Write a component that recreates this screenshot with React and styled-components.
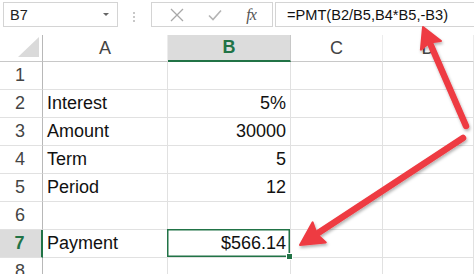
import * as React from 'react';
import styled, { createGlobalStyle } from 'styled-components';

const GlobalStyle = createGlobalStyle`
    html, body {
        margin:0;
        padding:0;
        background:#fff;
        overflow:hidden;
    }
`;

const GREEN = '#217346';
const GRID = '#e1e1e1';

const Page = styled.div`
    position:relative;
    width:474px;
    height:274px;
    overflow:hidden;
    background:#fff;
    font-family:"Liberation Sans", Arial, sans-serif;
`;

const Toolbar = styled.div`
    display:flex;
    align-items:flex-start;
    height:35px;
    padding-top:2px;
    box-sizing:border-box;
`;

const NameBox = styled.div`
    position:relative;
    display:flex;
    align-items:center;
    justify-content:space-between;
    width:115px;
    height:25px;
    margin-left:3px;
    padding:0 8px 0 6px;
    box-sizing:border-box;
    border:1px solid #d4d4d4;
    font-size:14.5px;
    color:#222;
`;

const DropArrow = styled.span`
    width:0;
    height:0;
    border-left:3px solid transparent;
    border-right:3px solid transparent;
    border-top:3px solid #666;
`;

const Grip = styled.div`
    display:flex;
    flex-direction:column;
    gap:2px;
    width:2px;
    margin:10px 16px 0 15px;
    span {
        width:2px;
        height:2px;
        background:#c8c8c8;
    }
`;

const FxButtons = styled.div`
    display:flex;
    align-items:center;
    justify-content:space-around;
    width:122px;
    height:25px;
    padding:0 4px 0 6px;
    box-sizing:border-box;
    border:1px solid #d4d4d4;
`;

const FxLabel = styled.span`
    font-family:"Liberation Serif", "Times New Roman", serif;
    font-style:italic;
    font-size:16px;
    color:#555;
    letter-spacing:-1px;
`;

const FormulaInput = styled.div`
    flex:1;
    display:flex;
    align-items:center;
    height:25px;
    margin-left:2px;
    padding-left:11px;
    box-sizing:border-box;
    border:1px solid #d4d4d4;
    border-right:none;
    font-size:14.6px;
    color:#111;
    white-space:nowrap;
`;

const Sheet = styled.div`
    display:grid;
    grid-template-columns:43px 125px 123px 92px 1fr;
    grid-template-rows:27px;
    grid-auto-rows:28px;
`;

const Cell = styled.div`
    position:relative;
    display:flex;
    align-items:center;
    justify-content:${p => (p.$right ? 'flex-end' : 'flex-start')};
    padding:${p => (p.$right ? '0 4px 0 0' : '0 0 0 4px')};
    box-sizing:border-box;
    border-right:1px solid ${GRID};
    border-bottom:1px solid ${GRID};
    font-size:18px;
    color:#111;
    box-shadow:${p => (p.$selected ? `inset 0 0 0 1.5px ${GREEN}` : 'none')};
    margin:${p => (p.$selected ? '-1px 0 0 -1px' : '0')};
`;

const Handle = styled.span`
    position:absolute;
    right:-3px;
    bottom:-3px;
    width:5px;
    height:5px;
    background:${GREEN};
    border:1px solid #fff;
    z-index:2;
`;

const ColHeader = styled.div`
    display:flex;
    align-items:center;
    justify-content:center;
    box-sizing:border-box;
    border-right:1px solid ${p => (p.$active ? '#c8c8c8' : '#ececec')};
    border-bottom:${p => (p.$active ? `2px solid ${GREEN}` : '1px solid #c8c8c8')};
    background:${p => (p.$active ? '#dcdcdc' : '#fff')};
    color:${p => (p.$active ? GREEN : '#444')};
    font-weight:${p => (p.$active ? 'bold' : 'normal')};
    font-size:18px;
`;

const Corner = styled.div`
    display:flex;
    align-items:flex-end;
    justify-content:flex-end;
    padding:0 3px 4px 0;
    box-sizing:border-box;
    border-right:1px solid #b8b8b8;
    border-bottom:1px solid #c8c8c8;
    span {
        width:21px;
        height:20px;
        background:#dadada;
        clip-path:polygon(100% 0, 100% 100%, 0 100%);
    }
`;

const RowHeader = styled.div`
    display:flex;
    align-items:center;
    justify-content:center;
    padding-right:2px;
    box-sizing:border-box;
    border-right:${p => (p.$active ? `2px solid ${GREEN}` : '1px solid #b8b8b8')};
    border-bottom:1px solid ${GRID};
    background:${p => (p.$active ? '#dcdcdc' : '#fff')};
    color:${p => (p.$active ? GREEN : '#444')};
    font-weight:${p => (p.$active ? 'bold' : 'normal')};
    font-size:18px;
`;

const Overlay = styled.svg`
    position:absolute;
    left:0;
    top:0;
    pointer-events:none;
`;

const columns = ['A', 'B', 'C', 'D'];

const rows = [
    { n: 1, label: '', value: '' },
    { n: 2, label: 'Interest', value: '5%' },
    { n: 3, label: 'Amount', value: '30000' },
    { n: 4, label: 'Term', value: '5' },
    { n: 5, label: 'Period', value: '12' },
    { n: 6, label: '', value: '' },
    { n: 7, label: 'Payment', value: '$566.14', selected: true },
    { n: 8, label: '', value: '' },
];

const Arrow = ({ tail, tip, len, half }) => {
    const dx = tip[0] - tail[0];
    const dy = tip[1] - tail[1];
    const d = Math.hypot(dx, dy);
    const ux = dx / d;
    const uy = dy / d;
    const bx = tip[0] - ux * len;
    const by = tip[1] - uy * len;
    const px = -uy;
    const py = ux;
    const head = `${tip[0]},${tip[1]} ${bx + px * half},${by + py * half} ${bx + ux * 3},${by + uy * 3} ${bx - px * half},${by - py * half}`;
    return <g filter="url(#shadow)">
        <line x1={tail[0]} y1={tail[1]} x2={bx + ux * 4} y2={by + uy * 4} stroke="#ee3b43" strokeWidth="6.5" strokeLinecap="round" />
        <polygon points={head} fill="#ee3b43" stroke="#ee3b43" strokeWidth="2" strokeLinejoin="round" />
    </g>;
};

const Toolbars = () => (
    <Toolbar>
        <NameBox>B7<DropArrow /></NameBox>
        <Grip><span /><span /><span /></Grip>
        <FxButtons>
            <svg width="14" height="14" viewBox="0 0 14 14">
                <path d="M1 1 L13 13 M13 1 L1 13" stroke="#a8a8a8" strokeWidth="1.3" fill="none" />
            </svg>
            <svg width="14" height="12" viewBox="0 0 14 12">
                <path d="M1 6.5 L5 10.5 L13 1.5" stroke="#b4b4b4" strokeWidth="1.6" fill="none" />
            </svg>
            <FxLabel>fx</FxLabel>
        </FxButtons>
        <FormulaInput>=PMT(B2/B5,B4*B5,-B3)</FormulaInput>
    </Toolbar>
);

export default function App() {
    return <>
        <GlobalStyle />
        <Page>
            <Toolbars />
            <Sheet>
                <Corner><span /></Corner>
                {columns.map(c => <ColHeader key={c} $active={c === 'B'}>{c}</ColHeader>)}
                {rows.map(r => (
                    <React.Fragment key={r.n}>
                        <RowHeader $active={r.selected}>{r.n}</RowHeader>
                        <Cell>{r.label}</Cell>
                        <Cell $right $selected={r.selected}>
                            {r.value}
                            {r.selected && <Handle />}
                        </Cell>
                        <Cell />
                        <Cell />
                    </React.Fragment>
                ))}
            </Sheet>
            <Overlay width="474" height="274">
                <defs>
                    <filter id="shadow" x="-20%" y="-20%" width="140%" height="140%">
                        <feDropShadow dx="1" dy="2" stdDeviation="1.5" floodColor="#000" floodOpacity="0.3" />
                    </filter>
                </defs>
                <Arrow tail={[466, 126]} tip={[423, 27]} len={20} half={11} />
                <Arrow tail={[463, 138]} tip={[300, 245]} len={23} half={12} />
            </Overlay>
        </Page>
    </>;
}
